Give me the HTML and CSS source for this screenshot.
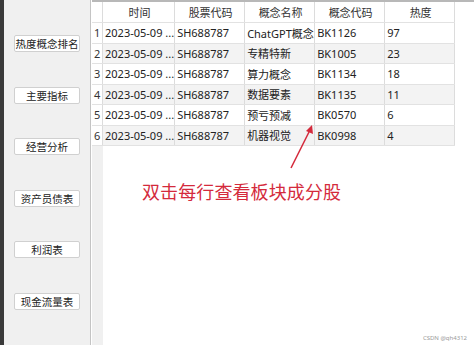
FILE: index.html
```html
<!DOCTYPE html>
<html lang="zh">
<head>
    <meta charset="UTF-8">
    <title>概念板块</title>
    <link rel="stylesheet" href="styles.css">
</head>
<body>
    <div class="frame-edge"></div>

    <div class="sidebar">
        <button class="side-btn">热度概念排名</button>
        <button class="side-btn">主要指标</button>
        <button class="side-btn">经营分析</button>
        <button class="side-btn">资产员债表</button>
        <button class="side-btn">利润表</button>
        <button class="side-btn">现金流量表</button>
    </div>

    <div class="table-area">
        <table class="grid">
            <thead>
                <tr>
                    <th class="corner"></th>
                    <th>时间</th>
                    <th>股票代码</th>
                    <th>概念名称</th>
                    <th>概念代码</th>
                    <th>热度</th>
                </tr>
            </thead>
            <tbody>
                <tr><td class="num">1</td><td>2023-05-09 ...</td><td>SH688787</td><td>ChatGPT概念</td><td>BK1126</td><td>97</td></tr>
                <tr><td class="num">2</td><td>2023-05-09 ...</td><td>SH688787</td><td>专精特新</td><td>BK1005</td><td>23</td></tr>
                <tr><td class="num">3</td><td>2023-05-09 ...</td><td>SH688787</td><td>算力概念</td><td>BK1134</td><td>18</td></tr>
                <tr><td class="num">4</td><td>2023-05-09 ...</td><td>SH688787</td><td>数据要素</td><td>BK1135</td><td>11</td></tr>
                <tr><td class="num">5</td><td>2023-05-09 ...</td><td>SH688787</td><td>预亏预减</td><td>BK0570</td><td>6</td></tr>
                <tr><td class="num">6</td><td>2023-05-09 ...</td><td>SH688787</td><td>机器视觉</td><td>BK0998</td><td>4</td></tr>
            </tbody>
        </table>

        <!-- annotation drawn over the screenshot -->
        <svg class="arrow" width="40" height="50" viewBox="0 0 40 50">
            <line x1="10" y1="47" x2="29" y2="9" stroke="#d42a3c" stroke-width="1.6"/>
            <polygon points="31,4 32,13 25,10" fill="#d42a3c"/>
        </svg>
        <div class="note">双击每行查看板块成分股</div>
        <div class="watermark">CSDN @qh4312</div>
    </div>
</body>
</html>
```

FILE: styles.css
```css
body {
    display: flex;
    height: 345px;
    margin: 0;
    overflow: hidden;
    font-family: "Noto Sans", "Noto Sans CJK SC", sans-serif;
    color: #222;
}
.frame-edge {
    width: 4px;
    background: #3a3a3a;
}
.sidebar {
    width: 87px;
    background: #f0f0f0;
    border-right: 1px solid #c4c4c4;
    display: flex;
    flex-direction: column;
    align-items: flex-start;
    gap: 34.5px;
    padding: 35px 0 0 10px;
    box-sizing: border-box;
}
.side-btn {
    width: 66px;
    height: 17px;
    padding: 0;
    background: #fff;
    border: 1px solid #d0d0d0;
    border-radius: 2px;
    font-family: "Noto Sans CJK SC", sans-serif;
    font-size: 10.5px;
    line-height: 15px;
    color: #222;
}
.table-area {
    flex-grow: 1;
    position: relative;
    margin-left: 1px;
    border-top: 2px solid #b8b8b8;
    background: linear-gradient(to right, #f0f0f0 11px, #fff 11px);
}
.grid {
    border-collapse: collapse;
    table-layout: fixed;
    font-size: 11px;
}
.grid th,
.grid td {
    width: 67px;
    padding: 0 0 0 2px;
    border-right: 1px solid #dcdcdc;
    border-bottom: 1px solid #e2e2e2;
    white-space: nowrap;
    overflow: hidden;
    text-align: left;
    background: #fff;
}
.grid th {
    height: 20px;
    font-weight: normal;
    text-align: center;
    color: #333;
}
.grid td {
    height: 19.5px;
}
.grid tbody tr:nth-child(even) td {
    background: #f3f3f3;
}
.grid .corner,
.grid .num {
    width: 8px;
    background: #fff;
    color: #333;
}
.grid tbody tr:nth-child(even) td.num {
    background: #fff;
}
.arrow {
    position: absolute;
    left: 189px;
    top: 119px;
}
.note {
    position: absolute;
    left: 50px;
    top: 176px;
    font-family: "Noto Sans CJK SC", serif;
    font-size: 18px;
    color: #d42a3c;
    letter-spacing: 0.1px;
}
.watermark {
    position: absolute;
    right: 7px;
    bottom: 3px;
    font-size: 6px;
    color: #9a9a9a;
}
```
